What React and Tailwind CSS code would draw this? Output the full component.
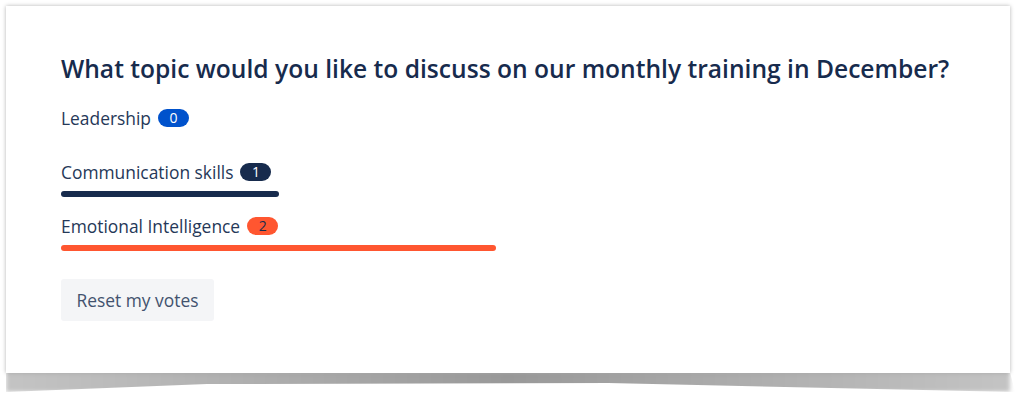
import React from "react";

const options = [
    { name: "Leadership", votes: 0, badge: "bg-[#0052cc] text-white", bar: "bg-[#0052cc]", width: 0 },
    { name: "Communication skills", votes: 1, badge: "bg-[#172b4d] text-white", bar: "bg-[#172b4d]", width: 218 },
    { name: "Emotional Intelligence", votes: 2, badge: "bg-[#ff5630] text-[#172b4d]", bar: "bg-[#ff5630]", width: 435 },
];

export default function App() {
    return (
        <div className="w-[1024px] h-[402px] bg-white pt-[6px] pl-[6px] font-['Open_Sans',sans-serif] overflow-hidden">
            <div className="w-[1004px]">
                {/* Card */}
                <div className="relative z-10 h-[367px] bg-white shadow-[0_0_4px_rgba(0,0,0,0.3)] pl-[55px] pt-[47px]">
                    <h2 className="text-[24.6px] leading-8 font-semibold text-[#172b4d]">
                        What topic would you like to discuss on our monthly training in December?
                    </h2>

                    {/* Options */}
                    <div className="mt-[21px] flex flex-col">
                        {options.map((opt) => (
                            <div key={opt.name} className="h-[54px]">
                                <div className="flex items-center gap-[7px] h-6 text-[17.4px] text-[#253858]">
                                    <span>{opt.name}</span>
                                    <span className={`${opt.badge} rounded-full h-[18px] w-[31px] flex items-center justify-center text-[14px] leading-none`}>
                                        {opt.votes}
                                    </span>
                                </div>
                                <div
                                    className={`${opt.bar} mt-[7px] h-[6px] rounded-full`}
                                    style={{ width: opt.width }}
                                />
                            </div>
                        ))}
                    </div>

                    <button className="mt-[11px] h-[42px] w-[153px] rounded-[3px] bg-[#f4f5f7] text-[17.4px] text-[#42526e]">
                        Reset my votes
                    </button>
                </div>

                {/* Curled bottom shadow */}
                <div className="h-[20px] -mt-[1px] blur-[2px] bg-gradient-to-r from-[#c4c4c4] via-[#999999] to-[#c4c4c4] [clip-path:polygon(0_0,100%_0,100.5%_100%,60%_55%,20%_60%,0_100%)]" />
            </div>
        </div>
    );
}
